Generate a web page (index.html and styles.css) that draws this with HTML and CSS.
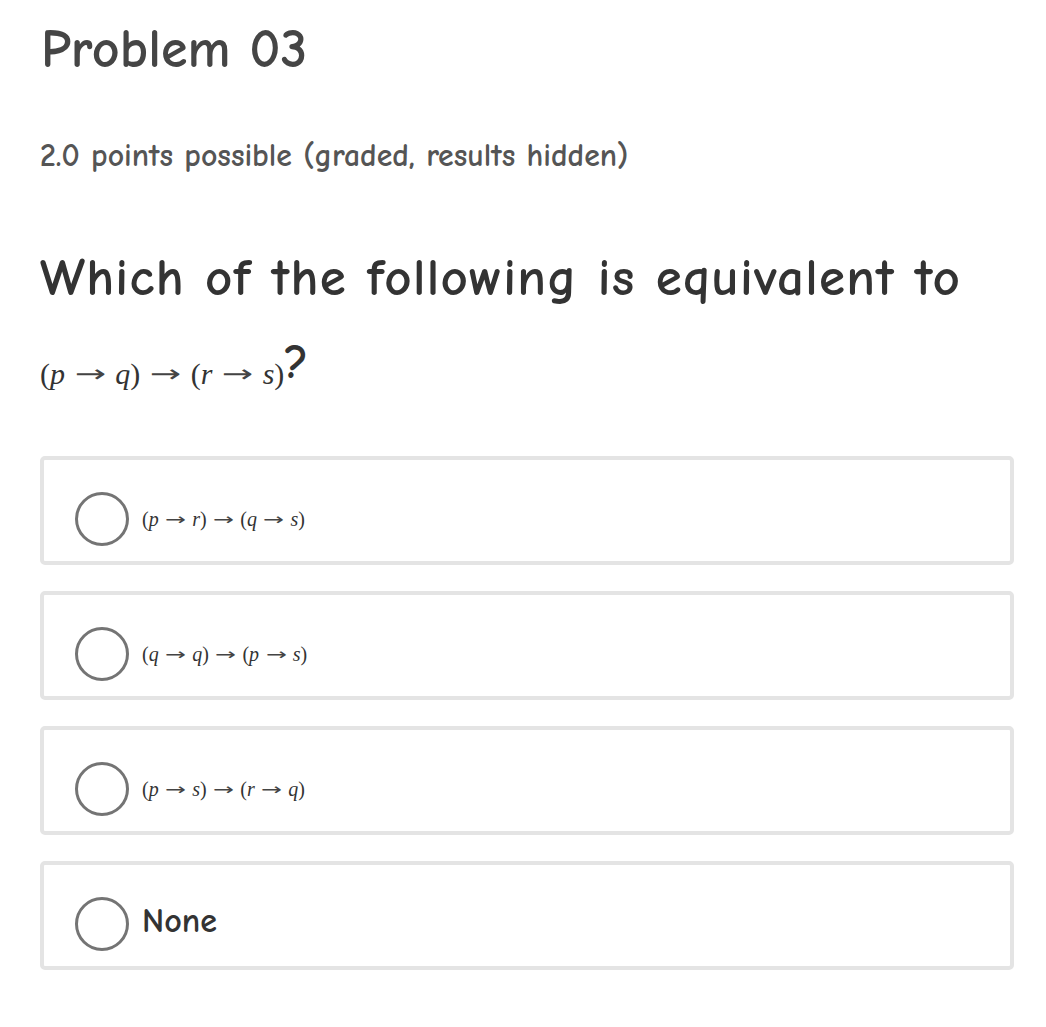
FILE: index.html
```html
<!DOCTYPE html>
<html lang="en">
<head>
<meta charset="utf-8">
<title>Problem 03</title>
<link rel="stylesheet" href="styles.css">
</head>
<body>
<main class="problem">
  <h1 class="title">Problem 03</h1>
  <p class="meta">2.0 points possible (graded, results hidden)</p>
  <h2 class="question">Which of the following is equivalent to</h2>
  <p class="expr"><span class="math big">(<i>p</i><span class="arr">→</span><i>q</i>)<span class="arr">→</span>(<i>r</i><span class="arr">→</span><i>s</i>)</span><span class="qmark">?</span></p>
  <ul class="options">
    <li class="option"><span class="radio"></span><span class="math small">(<i>p</i><span class="arr">→</span><i>r</i>)<span class="arr">→</span>(<i>q</i><span class="arr">→</span><i>s</i>)</span></li>
    <li class="option"><span class="radio"></span><span class="math small">(<i>q</i><span class="arr">→</span><i>q</i>)<span class="arr">→</span>(<i>p</i><span class="arr">→</span><i>s</i>)</span></li>
    <li class="option"><span class="radio"></span><span class="math small">(<i>p</i><span class="arr">→</span><i>s</i>)<span class="arr">→</span>(<i>r</i><span class="arr">→</span><i>q</i>)</span></li>
    <li class="option"><span class="radio"></span><span class="label">None</span></li>
  </ul>
</main>
</body>
</html>
```
FILE: styles.css
```css
html, body {
  margin: 0;
  padding: 0;
  background: #ffffff;
}
body {
  font-family: "Comic Neue", Lato, "Noto Sans", sans-serif;
}
.problem {
  padding: 18px 32px 0 40px;
}
.title {
  margin: 0;
  font-size: 54px;
  line-height: 64px;
  font-weight: 700;
  color: #454545;
  padding-left: 1px;
}
.meta {
  margin: 56px 0 0 0;
  font-size: 31.8px;
  line-height: 36px;
  color: #555555;
  font-weight: 700;
}
.question {
  margin: 76px 0 0 0;
  font-size: 53px;
  line-height: 56px;
  font-weight: 700;
  letter-spacing: 1.25px;
  color: #333333;
}
.expr {
  margin: 32px 0 0 0;
  display: flex;
  align-items: baseline;
  height: 56px;
  padding-top: 11px;
  box-sizing: border-box;
}
.math {
  font-family: "Liberation Serif", "DejaVu Serif", serif;
  color: #333333;
  white-space: nowrap;
}
.math i {
  font-style: italic;
}
.arr {
  display: inline-block;
  font-family: "DejaVu Sans", sans-serif;
  font-weight: 400;
  transform: scaleX(1.25) scaleY(0.8);
  margin: 0 0.42em;
  color: #444444;
}
.math.big {
  font-size: 30px;
  line-height: 45px;
}
.qmark {
  font-size: 48px;
  font-weight: 700;
  color: #333333;
  line-height: 40px;
  position: relative;
  top: -6px;
}
.options {
  list-style: none;
  margin: 62px 0 0 0;
  padding: 0;
  display: flex;
  flex-direction: column;
  gap: 26px;
}
.option {
  box-sizing: border-box;
  height: 109px;
  border: 4px solid #e4e4e4;
  border-radius: 5px;
  display: flex;
  align-items: center;
  padding-left: 31px;
  padding-top: 16px;
  gap: 13px;
}
.radio {
  box-sizing: border-box;
  width: 54px;
  height: 54px;
  border: 3px solid #747474;
  border-radius: 50%;
  flex: none;
}
.math.small {
  font-size: 20px;
}
.label {
  font-size: 34px;
  font-weight: 700;
  color: #333333;
  margin-top: -6px;
}
```
